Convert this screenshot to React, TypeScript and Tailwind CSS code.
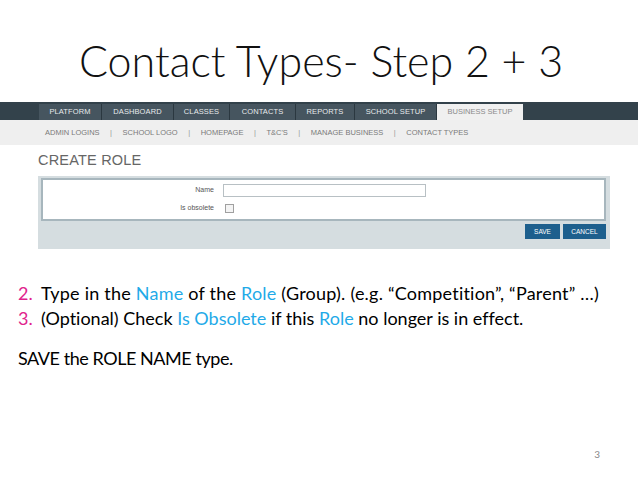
import * as React from "react";

const tabs = ["PLATFORM", "DASHBOARD", "CLASSES", "CONTACTS", "REPORTS", "SCHOOL SETUP"];
const tabWidths = ["w-[63px]", "w-[72px]", "w-[56px]", "w-[66px]", "w-[59px]", "w-[82px]"];
const subLinks = ["ADMIN LOGINS", "SCHOOL LOGO", "HOMEPAGE", "T&C'S", "MANAGE BUSINESS", "CONTACT TYPES"];

function NavBar() {
  return (
    <div className="h-[18px] bg-[#33424b] flex items-end pl-[39px]">
      {tabs.map((t, i) => (
        <div
          key={t}
          className={`${tabWidths[i]} h-[16px] bg-[#46555f] border-r border-[#2b3840] flex items-center justify-center text-[7.5px] text-[#e6eaec] tracking-[0.1px]`}
        >
          {t}
        </div>
      ))}
      <div className="w-[86px] h-[16px] bg-[#f0f0f0] flex items-center justify-center text-[7.5px] text-[#8a8a8a]">
        BUSINESS SETUP
      </div>
    </div>
  );
}

function SubNav() {
  return (
    <div className="h-[25px] bg-[#efefef] flex items-center pl-[45px] text-[7.5px] text-[#7a7a7a]">
      {subLinks.map((s, i) => (
        <React.Fragment key={s}>
          {i > 0 && <span className="px-[10.5px] text-[#999]">|</span>}
          <span>{s}</span>
        </React.Fragment>
      ))}
    </div>
  );
}

function RoleForm() {
  return (
    <div className="ml-[38px] w-[572px] bg-[#d5dde0] pt-[2px] pl-[3px] pr-[4px] pb-[3px]">
      <div className="bg-white border-2 border-[#a7b6bd] h-[43px] flex flex-col gap-[6px] pt-[4px] text-[7px] text-[#555]">
        <div className="flex items-center h-[13px]">
          <span className="w-[171px] text-right">Name</span>
          <div className="ml-[9px] w-[203px] h-[13px] border border-[#b8c0c4]" />
        </div>
        <div className="flex items-center h-[10px]">
          <span className="w-[171px] text-right">Is obsolete</span>
          <div className="ml-[11px] w-[9px] h-[9px] border border-[#a0a0a0] bg-[#f4f4f4]" />
        </div>
      </div>
      <div className="flex justify-end gap-[3px] pt-[3px] pb-[7px]">
        <div className="w-[35px] h-[15px] bg-[#1d5f8d] text-white text-[6.5px] flex items-center justify-center">SAVE</div>
        <div className="w-[43px] h-[15px] bg-[#1d5f8d] text-white text-[6.5px] flex items-center justify-center">CANCEL</div>
      </div>
    </div>
  );
}

export default function App() {
  const blue = "text-[#1faae8]";
  const pink = "text-[#e0238c]";
  return (
    <div className="w-[638px] h-[478px] bg-white flex flex-col overflow-hidden">
      <div className="h-[102px] flex justify-center pt-[39px] pl-[4px]">
        <h1 className="text-[43px] leading-none font-light text-[#111]" style={{ fontFamily: "Lato, 'DejaVu Sans', sans-serif" }}>
          Contact Types- Step 2 + 3
        </h1>
      </div>
      <div style={{ fontFamily: "'Liberation Sans', Arial, sans-serif" }}>
        <NavBar />
        <SubNav />
        <div className="h-[31px] flex items-center pl-[38px] text-[14.5px] text-[#666] tracking-[0.2px]">CREATE ROLE</div>
        <RoleForm />
      </div>
      <div className="pl-[18px] pt-[32px] text-[18px] leading-[25px] text-black [font-variant-ligatures:none]" style={{ fontFamily: "Lato, 'Open Sans', sans-serif" }}>
        <div className="flex tracking-[0.22px]">
          <span className={`${pink} w-[23px] tracking-normal`}>2.</span>
          <span>
            Type in the <span className={blue}>Name</span> of the <span className={blue}>Role</span> (Group). (e.g. “Competition”, “Parent” …)
          </span>
        </div>
        <div className="flex">
          <span className={`${pink} w-[23px]`}>3.</span>
          <span>
            (Optional) Check <span className={blue}>Is Obsolete</span> if this <span className={blue}>Role</span> no longer is in effect.
          </span>
        </div>
        <div className="mt-[15px] tracking-[-0.45px]">SAVE the ROLE NAME type.</div>
      </div>
      <div className="mt-auto mb-[16px] pr-[38px] text-right text-[10px] text-[#888]" style={{ fontFamily: "Lato, sans-serif" }}>
        3
      </div>
    </div>
  );
}
